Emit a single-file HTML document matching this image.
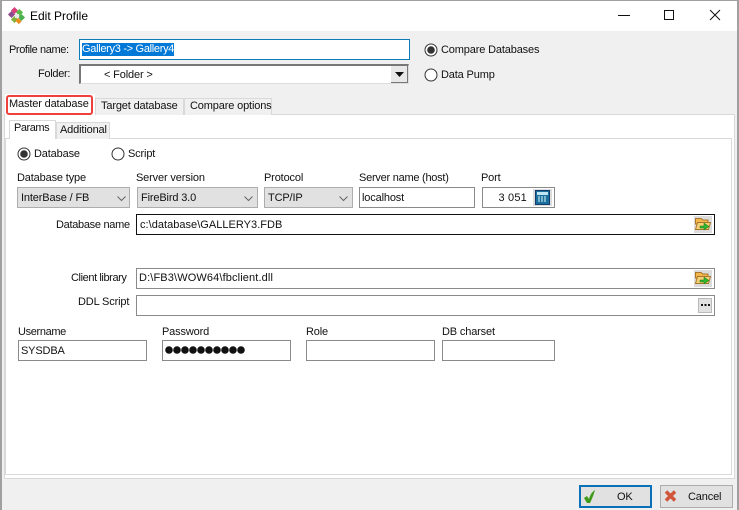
<!DOCTYPE html>
<html><head><meta charset="utf-8"><style>
html,body{margin:0;padding:0}
body{width:739px;height:510px;position:relative;overflow:hidden;background:#f0f0f0;font-family:"Liberation Sans",sans-serif;font-size:11px;color:#111}
div,span.t{position:absolute;box-sizing:border-box;white-space:nowrap}
.t{line-height:14px;letter-spacing:-.15px}
.f{background:#fff;border:1px solid #8a8a8a}
.c{background:#e1e1e1;border:1px solid #adadad}
.tab{background:#f0f0f0;border:1px solid #d9d9d9;border-bottom:0}
svg{position:absolute;overflow:visible}
</style></head><body>
<div style="left:0;top:0;width:739px;height:510px;border:1px solid #a0a0a0;border-left-width:2px;border-right-width:2px;border-bottom:0"></div>
<div style="left:2px;top:1px;width:735px;height:30px;background:#fff"></div>
<svg style="left:8px;top:7px" width="18" height="18" viewBox="0 0 18 18">
<rect x="4" y="1" width="5" height="5" fill="#d9407a" transform="rotate(45 6.5 3.5)"/>
<rect x="1" y="5" width="5" height="5" fill="#8c4a8c" transform="rotate(45 3.5 7.5)"/>
<rect x="9" y="3" width="5" height="5" fill="#58b947" transform="rotate(45 11.500 5.500)"/>
<rect x="11" y="8" width="5" height="5" fill="#4caf50" transform="rotate(45 13.500 10.500)"/>
<rect x="4" y="10" width="5" height="5" fill="#7fb33c" transform="rotate(45 6.500 12.500)"/>
<rect x="8" y="12" width="5" height="4" fill="#ef8a1f" transform="rotate(45 10.500 14)"/>
<rect x="7" y="7" width="4" height="4" fill="#e8e8e8"/>
</svg>
<span class="t" style="left:30px;top:9px;color:#000;letter-spacing:0;font-size:12px">Edit Profile</span>
<svg style="left:618px;top:8px" width="110" height="16" fill="none" stroke="#111" stroke-width="1">
<path d="M0 7.500H12"/><rect x="46.500" y="2.500" width="9" height="9"/><path d="M92 2L102 12M102 2L92 12"/>
</svg>

<span class="t" style="left:9px;top:43px;letter-spacing:-.4px">Profile name:</span>
<div class="f" style="left:79px;top:39px;width:331px;height:21px;border-color:#0f7ab8"></div>
<div style="left:82px;top:43px;width:92px;height:13px;background:#0078d7"></div>
<span class="t" style="left:82px;top:42px;color:#fff;letter-spacing:-.3px">Gallery3 -&gt; Gallery4</span>
<span class="t" style="left:38px;top:67px;letter-spacing:-.3px">Folder:</span>
<div style="left:79px;top:64px;width:330px;height:20px;background:#fff;border-top:2px solid #777;border-left:2px solid #777;border-right:1px solid #ddd;border-bottom:1px solid #ddd"></div>
<span class="t" style="left:104px;top:68px">&lt; Folder &gt;</span>
<div style="left:391px;top:66px;width:17px;height:17px;background:#e8e8e8;border-right:1px solid #777;border-bottom:1px solid #777"></div>
<svg style="left:395px;top:72px" width="9" height="5"><path d="M0 0H9L4.500 5Z" fill="#111"/></svg>
<svg style="left:424px;top:43px" width="14" height="14"><circle cx="7" cy="7" r="6" fill="#fff" stroke="#333"/><circle cx="7" cy="7" r="3.800" fill="#333"/></svg>
<span class="t" style="left:441px;top:43px">Compare Databases</span>
<svg style="left:424px;top:68px" width="14" height="14"><circle cx="7" cy="7" r="6" fill="#fff" stroke="#333"/></svg>
<span class="t" style="left:441px;top:68px">Data Pump</span>

<div style="left:4px;top:114px;width:731px;height:365px;background:#fff;border:1px solid #d9d9d9"></div>
<div class="tab" style="left:95px;top:98px;width:89px;height:17px"></div>
<span class="t" style="left:101px;top:99px">Target database</span>
<div class="tab" style="left:184px;top:98px;width:88px;height:17px"></div>
<span class="t" style="left:190px;top:99px">Compare options</span>
<div style="left:5px;top:94px;width:90px;height:22px;background:#fff"></div>
<div style="left:6px;top:95px;width:87px;height:20px;border:2px solid #f0403c;border-radius:3px"></div>
<span class="t" style="left:9px;top:97px">Master database</span>

<div style="left:5px;top:138px;width:727px;height:337px;background:#fff;border:1px solid #d9d9d9"></div>
<div class="tab" style="left:56px;top:122px;width:54px;height:17px"></div>
<span class="t" style="left:60px;top:123px">Additional</span>
<div style="left:9px;top:120px;width:47px;height:19px;background:#fff;border:1px solid #d9d9d9;border-bottom:0"></div>
<span class="t" style="left:14px;top:121px;letter-spacing:-.45px">Params</span>

<svg style="left:17px;top:147px" width="14" height="14"><circle cx="7" cy="7" r="6" fill="#fff" stroke="#333"/><circle cx="7" cy="7" r="3.800" fill="#333"/></svg>
<span class="t" style="left:34px;top:147px">Database</span>
<svg style="left:111px;top:147px" width="14" height="14"><circle cx="7" cy="7" r="6" fill="#fff" stroke="#333"/></svg>
<span class="t" style="left:128px;top:147px">Script</span>

<span class="t" style="left:17px;top:171px">Database type</span>
<span class="t" style="left:136px;top:171px">Server version</span>
<span class="t" style="left:264px;top:171px">Protocol</span>
<span class="t" style="left:359px;top:171px;letter-spacing:-.25px">Server name (host)</span>
<span class="t" style="left:481px;top:171px">Port</span>

<div class="c" style="left:17px;top:187px;width:113px;height:21px"></div>
<span class="t" style="left:21px;top:191px">InterBase / FB</span>
<div class="c" style="left:137px;top:187px;width:121px;height:21px"></div>
<span class="t" style="left:141px;top:191px">FireBird 3.0</span>
<div class="c" style="left:264px;top:187px;width:89px;height:21px"></div>
<span class="t" style="left:268px;top:191px">TCP/IP</span>
<svg style="left:117px;top:196px" width="10" height="6" fill="none" stroke="#666"><path d="M0.500 0.500L4.500 4.500L8.500 0.500"/></svg>
<svg style="left:244px;top:196px" width="10" height="6" fill="none" stroke="#666"><path d="M0.500 0.500L4.500 4.500L8.500 0.500"/></svg>
<svg style="left:339px;top:196px" width="10" height="6" fill="none" stroke="#666"><path d="M0.500 0.500L4.500 4.500L8.500 0.500"/></svg>

<div class="f" style="left:359px;top:187px;width:116px;height:21px"></div>
<span class="t" style="left:362px;top:191px">localhost</span>
<div class="f" style="left:482px;top:187px;width:73px;height:21px"></div>
<span class="t" style="left:497px;top:191px;width:30px;text-align:right;letter-spacing:.2px">3 051</span>
<div style="left:533px;top:189px;width:19px;height:17px;background:#dcdcdc"></div>
<svg style="left:535px;top:190px" width="15" height="15"><rect x="0.500" y="0.500" width="14" height="14" fill="#1b6f9c" stroke="#123a6b"/><rect x="2" y="2" width="11" height="3" fill="#bfe6f2"/><path d="M3 7h9M3 9h9M3 11h9" stroke="#dff" stroke-dasharray="2 1"/></svg>

<span class="t" style="left:56px;top:218px;letter-spacing:-.3px">Database name</span>
<div class="f" style="left:136px;top:214px;width:579px;height:21px;border-color:#111"></div>
<span class="t" style="left:140px;top:218px;letter-spacing:.03px">c:\database\GALLERY3.FDB</span>
<div style="left:694px;top:216px;width:18px;height:17px;background:#dcdcdc"></div>
<svg style="left:694px;top:215px" width="18" height="18"><path d="M1.500 3.500H7L9 5H14V9H1.500Z" fill="#f2b64c" stroke="#a8782a"/><path d="M1.500 14.500L3.500 7.500H16.500L14.500 14.500Z" fill="#f7cf75" stroke="#a8782a"/><path d="M6 11H10V8L15 11.500L10 15V13H6Z" fill="#2fb52f" stroke="#1a7a1a" stroke-width=".5"/></svg>

<span class="t" style="left:71px;top:271px;letter-spacing:-.4px">Client library</span>
<div class="f" style="left:136px;top:268px;width:579px;height:21px"></div>
<span class="t" style="left:139px;top:271px;letter-spacing:.13px">D:\FB3\WOW64\fbclient.dll</span>
<div style="left:694px;top:270px;width:18px;height:17px;background:#dcdcdc"></div>
<svg style="left:694px;top:269px" width="18" height="18"><path d="M1.500 3.500H7L9 5H14V9H1.500Z" fill="#f2b64c" stroke="#a8782a"/><path d="M1.500 14.500L3.500 7.500H16.500L14.500 14.500Z" fill="#f7cf75" stroke="#a8782a"/><path d="M6 11H10V8L15 11.500L10 15V13H6Z" fill="#2fb52f" stroke="#1a7a1a" stroke-width=".5"/></svg>

<span class="t" style="left:78px;top:295px">DDL Script</span>
<div class="f" style="left:136px;top:295px;width:579px;height:21px"></div>
<div style="left:698px;top:298px;width:14px;height:15px;background:#e1e1e1;border:1px solid #bbb"></div>
<svg style="left:701px;top:304px" width="9" height="3"><path d="M0 0h2v2H0zM3.500 0h2v2h-2zM7 0h2v2H7z" fill="#111"/></svg>

<span class="t" style="left:18px;top:325px;letter-spacing:-.35px">Username</span>
<span class="t" style="left:162px;top:325px">Password</span>
<span class="t" style="left:306px;top:325px">Role</span>
<span class="t" style="left:442px;top:325px">DB charset</span>
<div class="f" style="left:18px;top:340px;width:129px;height:21px"></div>
<span class="t" style="left:21px;top:344px">SYSDBA</span>
<div class="f" style="left:162px;top:340px;width:129px;height:21px"></div>
<svg style="left:165px;top:345px" width="82" height="10" fill="#111"><circle cx="4" cy="5" r="3.800"/><circle cx="12" cy="5" r="3.800"/><circle cx="20" cy="5" r="3.800"/><circle cx="28" cy="5" r="3.800"/><circle cx="36" cy="5" r="3.800"/><circle cx="44" cy="5" r="3.800"/><circle cx="52" cy="5" r="3.800"/><circle cx="60" cy="5" r="3.800"/><circle cx="68" cy="5" r="3.800"/><circle cx="76" cy="5" r="3.800"/></svg>
<div class="f" style="left:306px;top:340px;width:129px;height:21px"></div>
<div class="f" style="left:442px;top:340px;width:113px;height:21px"></div>

<div style="left:579px;top:485px;width:73px;height:23px;background:#e1e1e1;border:2px solid #0a70b8"></div>
<svg style="left:583px;top:489px" width="14" height="16"><path d="M1 9L4 7L6 10C7 6 9 3 12 1C11 5 9 10 7 14L4 14Z" fill="#3f9a1c"/></svg>
<span class="t" style="left:617px;top:490px">OK</span>
<div style="left:660px;top:485px;width:73px;height:23px;background:#e1e1e1;border:1px solid #adadad"></div>
<svg style="left:664px;top:490px" width="13" height="12" fill="none" stroke="#d0553a" stroke-width="3.500"><path d="M2 1.500L11 10.500M11 1.500L2 10.500"/></svg>
<span class="t" style="left:688px;top:490px">Cancel</span>
</body></html>
